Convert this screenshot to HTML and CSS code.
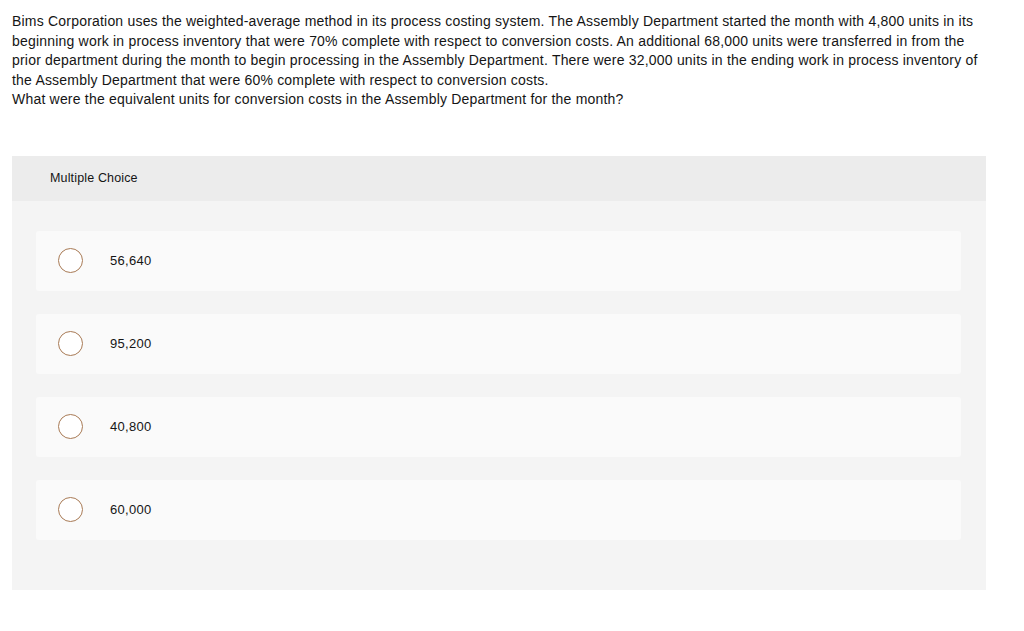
FILE: index.html
```html
<!DOCTYPE html>
<html>
<head>
<meta charset="utf-8">
<link rel="stylesheet" href="styles.css">
</head>
<body>
<div class="page">
  <div class="question">
    <p>Bims Corporation uses the weighted-average method in its process costing system. The Assembly Department started the month with 4,800 units in its beginning work in process inventory that were 70% complete with respect to conversion costs. An additional 68,000 units were transferred in from the prior department during the month to begin processing in the Assembly Department. There were 32,000 units in the ending work in process inventory of the Assembly Department that were 60% complete with respect to conversion costs.</p>
    <p>What were the equivalent units for conversion costs in the Assembly Department for the month?</p>
  </div>
  <div class="panel">
    <div class="panel-head">Multiple Choice</div>
    <div class="options">
      <div class="option"><span class="radio"></span><span class="label">56,640</span></div>
      <div class="option"><span class="radio"></span><span class="label">95,200</span></div>
      <div class="option"><span class="radio"></span><span class="label">40,800</span></div>
      <div class="option"><span class="radio"></span><span class="label">60,000</span></div>
    </div>
  </div>
</div>
</body>
</html>
```
FILE: styles.css
```css
html, body {
  margin: 0;
  padding: 0;
  background: #ffffff;
}
body {
  font-family: "Liberation Sans", Arial, sans-serif;
  color: #151515;
}
.page {
  padding: 12px 38px 0 12px;
}
.question p {
  margin: 0;
  font-size: 14px;
  line-height: 19.5px;
  letter-spacing: 0.2px;
}
.panel {
  margin-top: 46px;
  background: #f4f4f4;
  width: 974px;
  padding-bottom: 50px;
}
.panel-head {
  background: #ececec;
  height: 45px;
  display: flex;
  align-items: center;
  padding-left: 38px;
  font-size: 12.5px;
  letter-spacing: 0.15px;
  color: #151515;
}
.options {
  display: flex;
  flex-direction: column;
  gap: 23px;
  padding: 30px 25px 0 24px;
}
.option {
  background: #fafafa;
  border-radius: 3px;
  height: 60px;
  display: flex;
  align-items: center;
  padding-left: 22px;
}
.radio {
  width: 23px;
  height: 23px;
  border: 1.5px solid #a87a55;
  border-radius: 50%;
  background: #fff;
  flex: none;
}
.label {
  margin-left: 27px;
  font-size: 13px;
  letter-spacing: 0.3px;
  color: #151515;
}
```
